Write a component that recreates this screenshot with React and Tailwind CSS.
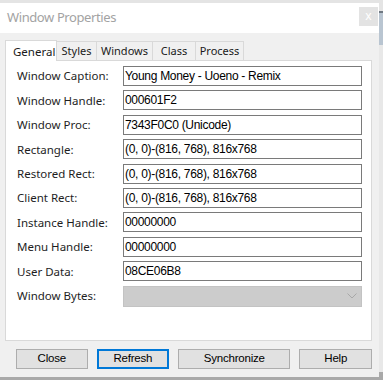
import React from "react";

const rows = [
  ["Window Caption:", "Young Money - Uoeno - Remix"],
  ["Window Handle:", "000601F2"],
  ["Window Proc:", "7343F0C0 (Unicode)"],
  ["Rectangle:", "(0, 0)-(816, 768), 816x768"],
  ["Restored Rect:", "(0, 0)-(816, 768), 816x768"],
  ["Client Rect:", "(0, 0)-(816, 768), 816x768"],
  ["Instance Handle:", "00000000"],
  ["Menu Handle:", "00000000"],
  ["User Data:", "08CE06B8"],
];

const tabs = [
  ["Styles", "w-[40px]"],
  ["Windows", "w-[56px]"],
  ["Class", "w-[43px]"],
  ["Process", "w-[48px]"],
];

const buttons = [
  ["Close", "w-[72px]", false],
  ["Refresh", "w-[73px]", true],
  ["Synchronize", "w-[113px]", false],
  ["Help", "w-[73px]", false],
];

export default function App() {
  return (
    <div className="w-[383px] h-[380px] flex bg-[#e4e4e4] overflow-hidden font-['Noto_Sans',sans-serif] text-[11px] text-[#1a1a1a]">
      <div className="w-[379px] flex flex-col">
        <div className="h-[3px] bg-[#e4e4e4]" />
        {/* title bar */}
        <div className="h-[30px] bg-white flex items-center justify-between pl-[7px] pr-[1px]">
          <span className="text-[13px] tracking-[-0.4px] text-[#a3a3a3]">Window Properties</span>
          <div className="w-[19px] h-[19px] bg-[#e3e3e3] flex items-center justify-center text-white text-[12px] leading-none mb-[4px]">x</div>
        </div>
        {/* body */}
        <div className="flex-1 bg-[#f0f0f0] flex flex-col pl-[5px] pr-[7px]">
          <div className="flex items-end h-[27px]">
            <div className="w-[52px] h-[21px] bg-white border border-b-0 border-[#d9d9d9] pl-[7px] pt-[2px] relative top-[1px] z-10 text-[11.5px]">General</div>
            {tabs.map(([t, w]) => (
              <div key={t} className={`${w} h-[19px] border border-l-0 border-b-0 border-[#d9d9d9] flex items-center justify-center`}>{t}</div>
            ))}
          </div>
          <div className="h-[281px] bg-white border border-[#d9d9d9] pl-[11px] pr-[9px] pt-[5px] flex flex-col gap-[4.4px]">
            {rows.map(([l, v]) => (
              <div key={l} className="flex items-center h-[20px]">
                <div className="w-[106px] text-[11.5px] text-[#1e1e1e]">{l}</div>
                <div className="flex-1 h-[20px] border border-[#7a7a7a] pl-[1px] flex items-center font-['Liberation_Sans',sans-serif] text-[12px] tracking-[-0.3px] text-black">{v}</div>
              </div>
            ))}
            <div className="flex items-center h-[21px]">
              <div className="w-[106px] text-[11.5px] text-[#1e1e1e]">Window Bytes:</div>
              <div className="flex-1 h-[21px] bg-[#cccccc] border border-[#c3c3c3] flex items-center justify-end pr-[4px]">
                <svg width="10" height="6" viewBox="0 0 10 6" fill="none" stroke="#a8a8a8" strokeWidth="1">
                  <path d="M0.5 0.5 L5 5 L9.5 0.5" />
                </svg>
              </div>
            </div>
          </div>
          <div className="flex gap-[9px] pl-[11px] pt-[8px]">
            {buttons.map(([b, w, active]) => (
              <div
                key={b}
                className={`${w} h-[20px] bg-[#e1e1e1] flex items-center justify-center font-['Liberation_Sans',sans-serif] text-[11.5px] tracking-[-0.2px] text-black ${active ? "border-2 border-[#0078d7]" : "border border-[#adadad]"}`}
              >
                {b}
              </div>
            ))}
          </div>
        </div>
        <div className="h-[3px] bg-[#a9a9a9]" />
      </div>
      <div className="w-[4px] flex flex-col">
        <div className="h-[11px] bg-[#e4e4e4]" />
        <div className="h-[2px] bg-[#6f7882]" />
        <div className="h-[32px] bg-[#b9c5d1]" />
        <div className="flex-1 bg-[#e8e8e8]" />
        <div className="h-[8px] bg-[#a9a9a9]" />
      </div>
    </div>
  );
}
